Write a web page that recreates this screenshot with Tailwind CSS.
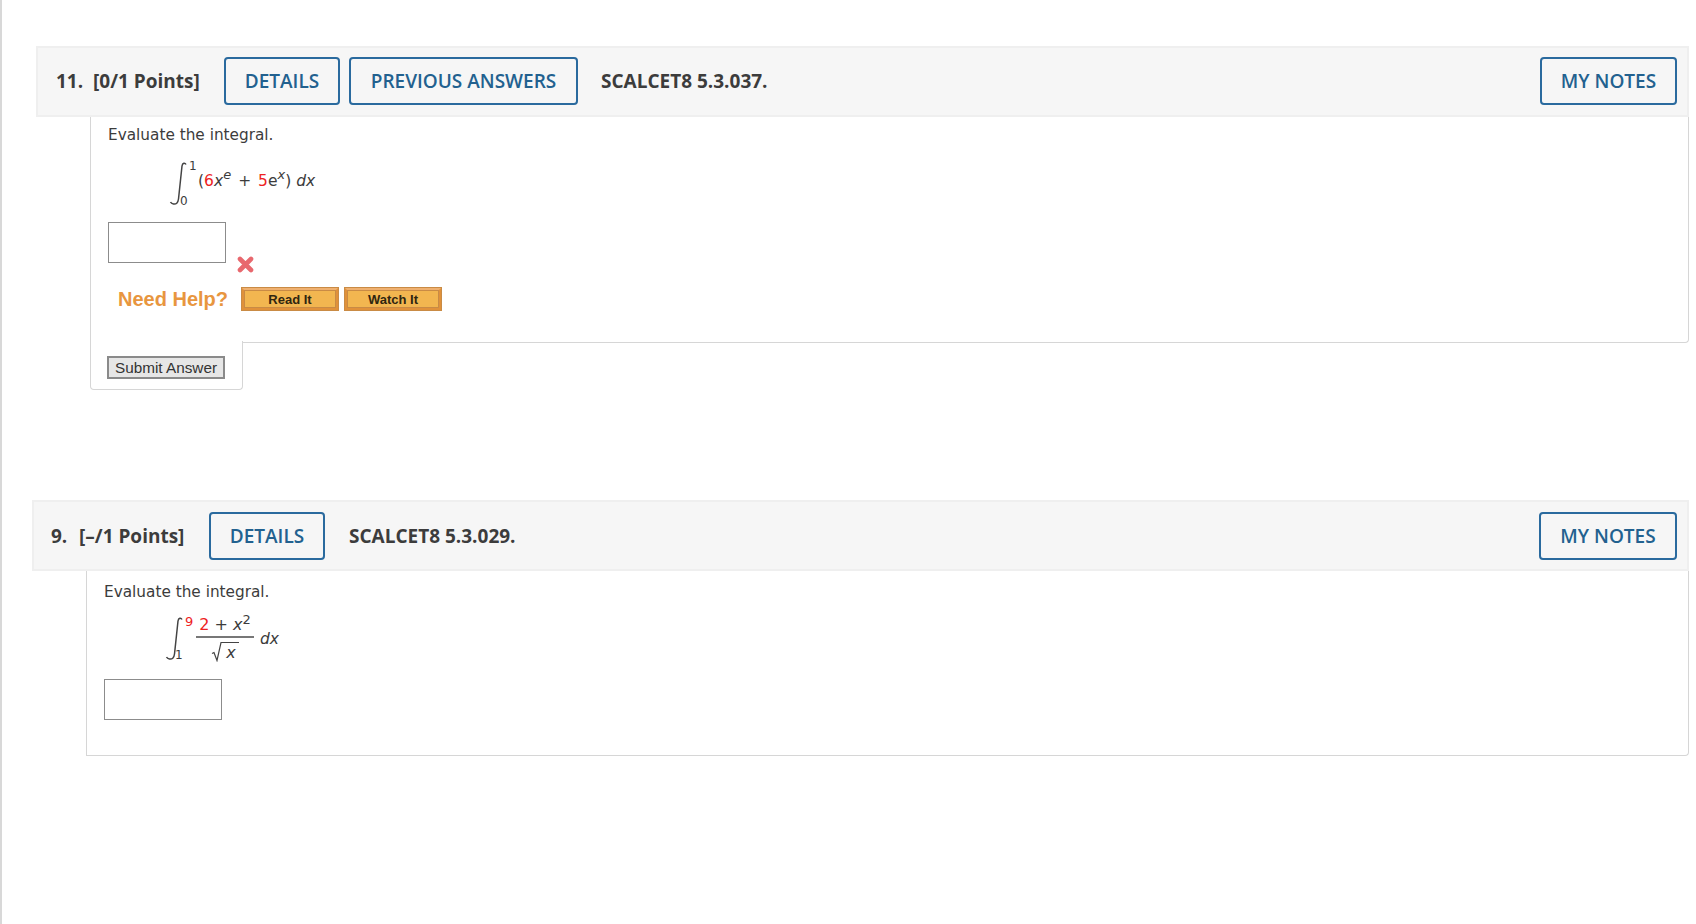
<!DOCTYPE html>
<html>
<head>
    <title>SCALCET8 Assignment</title>
    <script src="https://cdn.jsdelivr.net/npm/@tailwindcss/browser@4"></script>
</head>
<body class="bg-white">
    <div class="h-[924px] overflow-hidden border-l-2 border-[#d8d8d8] pt-[46px] text-[#3c3c3c]">

        <!-- question 11 -->
        <section class="ml-[34px] w-[1653px]">
            <div class="flex h-[71px] items-center border-2 border-[#efefef] bg-[#f6f6f6] pl-[18px] pr-[10px] font-['Open_Sans',sans-serif] text-[19px] font-semibold">
                <span class="w-[37px] shrink-0 font-bold">11.</span>
                <span class="w-[131px] shrink-0 font-bold">[0/1 Points]</span>
                <a class="-mt-[2px] flex h-[48px] w-[116px] shrink-0 items-center justify-center rounded-[4px] border-2 border-[#2a6a9e] pt-[2px] text-[#22618f]">DETAILS</a>
                <a class="-mt-[2px] ml-[9px] flex h-[48px] w-[229px] shrink-0 items-center justify-center rounded-[4px] border-2 border-[#2a6a9e] pt-[2px] text-[#22618f]">PREVIOUS ANSWERS</a>
                <span class="ml-[23px] font-bold">SCALCET8 5.3.037.</span>
                <a class="-mt-[2px] ml-auto flex h-[48px] w-[137px] shrink-0 items-center justify-center rounded-[4px] border-2 border-[#2a6a9e] pt-[2px] text-[#22618f]">MY NOTES</a>
            </div>
            <div class="ml-[54px] h-[226px] rounded-br-[4px] border-r-[1.5px] border-b-[1.5px] border-l-[1.5px] border-[#d6d6d6] pl-[17px] pt-[8px] font-['DejaVu_Sans',sans-serif] text-[15.3px]">
                <p class="leading-[20px]">Evaluate the integral.</p>
                <div class="relative mt-[7px] ml-[60px] flex h-[65px] items-center pb-[6px] pl-[30px] text-[15.5px] leading-none">
                    <svg class="absolute left-0 top-[9px]" width="20" height="45" viewBox="0 0 20 45" fill="none" stroke="#444" stroke-width="1.5"><path d="M18 3.500c-1-2-3.500-2-4 1.500L10.500 38c-.5 4-2.500 5.500-5 5-1.500-.3-2.500-1-3-2"/></svg>
                    <span class="absolute left-[21px] top-[8px] text-[12px]">1</span>
                    <span class="absolute left-[12px] top-[43px] text-[12px]">0</span>
                    <span>(<span class="text-[#ee2222]">6</span><i>x</i><sup class="text-[13px] italic">e</sup><span class="ml-[7px]">+</span> <span class="ml-[2px] text-[#ee2222]">5</span>e<sup class="text-[13px] italic">x</sup>) <i>dx</i></span>
                </div>
                <div class="mt-[5px] flex items-end">
                    <input type="text" class="h-[41px] w-[118px] border border-[#8c8c8c] bg-white">
                    <svg class="-mb-[10px] ml-[11px]" width="17" height="17" viewBox="0 0 17 17"><path d="M3 3l11 11M14 3L3 14" stroke="#e8686e" stroke-width="4.600" stroke-linecap="round"/></svg>
                </div>
                <div class="mt-[24px] flex items-center font-['Liberation_Sans',sans-serif]">
                    <span class="ml-[10px] w-[123px] text-[20px] font-bold leading-[23px] text-[#e8963f]">Need Help?</span>
                    <a class="flex h-[24px] w-[98px] items-center justify-center border-[3px] border-[#e0913a] border-t-[#efb070] bg-[#f2b650] pt-[2px] text-[13px] font-bold text-[#2f2610] shadow-[inset_0_0_0_1px_#c98b45] outline outline-[#c98b45] -outline-offset-1">Read It</a>
                    <a class="ml-[5px] flex h-[24px] w-[98px] items-center justify-center border-[3px] border-[#e0913a] border-t-[#efb070] bg-[#f2b650] pt-[2px] text-[13px] font-bold text-[#2f2610] shadow-[inset_0_0_0_1px_#c98b45] outline outline-[#c98b45] -outline-offset-1">Watch It</a>
                </div>
            </div>
            <div class="relative -mt-[2px] ml-[54px] h-[49px] w-[153px] rounded-b-[4px] border-r-[1.5px] border-b-[1.5px] border-l-[1.5px] border-[#d6d6d6] bg-white pl-[16px] pt-[14px]">
                <button class="h-[23px] w-[118px] border-2 border-[#8a8a8a] bg-[#e6e6e6] font-['Liberation_Sans',sans-serif] text-[15.3px] leading-none text-[#333]">Submit Answer</button>
            </div>
        </section>

        <!-- question 9 -->
        <section class="ml-[30px] mt-[110px] w-[1657px]">
            <div class="flex h-[71px] items-center border-2 border-[#efefef] bg-[#f6f6f6] pl-[17px] pr-[10px] font-['Open_Sans',sans-serif] text-[19px] font-semibold">
                <span class="mt-[2px] w-[28px] shrink-0 font-bold">9.</span>
                <span class="mt-[2px] w-[130px] shrink-0 font-bold">[–/1 Points]</span>
                <a class="flex h-[48px] w-[116px] shrink-0 items-center justify-center rounded-[4px] border-2 border-[#2a6a9e] pt-[2px] text-[#22618f]">DETAILS</a>
                <span class="ml-[24px] mt-[2px] font-bold">SCALCET8 5.3.029.</span>
                <a class="ml-auto flex h-[48px] w-[138px] shrink-0 items-center justify-center rounded-[4px] border-2 border-[#2a6a9e] pt-[2px] text-[#22618f]">MY NOTES</a>
            </div>
            <div class="ml-[54px] h-[185px] rounded-br-[4px] border-r-[1.5px] border-b-[1.5px] border-l-[1.5px] border-[#d6d6d6] pl-[17px] pt-[11px] font-['DejaVu_Sans',sans-serif] text-[15.3px]">
                <p class="leading-[20px]">Evaluate the integral.</p>
                <div class="relative mt-[4px] ml-[60px] flex h-[67px] items-center pl-[32px] text-[15.5px] leading-none">
                    <svg class="absolute left-0 top-[10px]" width="20" height="45" viewBox="0 0 20 45" fill="none" stroke="#444" stroke-width="1.5"><path d="M18 3.500c-1-2-3.500-2-4 1.500L10.500 38c-.5 4-2.500 5.500-5 5-1.500-.3-2.500-1-3-2"/></svg>
                    <span class="absolute left-[21px] top-[9px] text-[13px] text-[#ee2222]">9</span>
                    <span class="absolute left-[11px] top-[43px] text-[12px]">1</span>
                    <div class="flex flex-col items-center">
                        <span class="w-[58px] border-b-2 border-[#777] pb-[3px] text-center text-[16px] whitespace-nowrap"><span class="text-[#ee2222]">2</span> + <i>x</i><sup class="text-[13px]">2</sup></span>
                        <span class="mt-[3px] flex items-center"><svg width="15" height="21" viewBox="0 0 15 20" fill="none" stroke="#444" stroke-width="1.2"><path d="M1 12l2-1 3 8L10 1h5"/></svg><i class="border-t border-[#444] pr-[3px] pt-[2px] text-[16px]">x</i></span>
                    </div>
                    <i class="ml-[6px]">dx</i>
                </div>
                <input type="text" class="mt-[6px] block h-[41px] w-[118px] border border-[#8c8c8c] bg-white">
            </div>
        </section>
    </div>
</body>
</html>
